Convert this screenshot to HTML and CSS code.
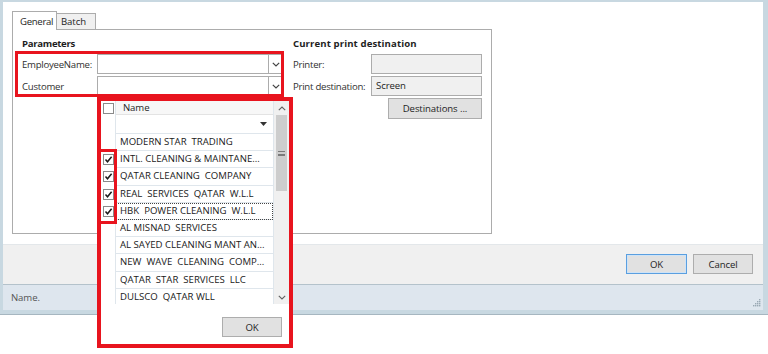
FILE: index.html
```html
<!DOCTYPE html>
<html>
<head>
<meta charset="utf-8">
<link rel="stylesheet" href="styles.css">
</head>
<body>
<div class="window">
  <div class="client">
    <div class="main">
      <div class="tabs">
        <div class="tab tab-active">General</div>
        <div class="tab tab-batch">Batch</div>
      </div>
      <div class="panel">
        <div class="group params">
          <div class="group-title">Parameters</div>
          <div class="row">
            <span class="lbl">EmployeeName:</span>
            <div class="combo"><span class="combo-btn"><svg width="8" height="5" viewBox="0 0 8 5"><path d="M0.8 0.8 L4 4 L7.2 0.8" fill="none" stroke="#444" stroke-width="1.2"/></svg></span></div>
          </div>
          <div class="row">
            <span class="lbl">Customer</span>
            <div class="combo"><span class="combo-btn"><svg width="8" height="5" viewBox="0 0 8 5"><path d="M0.8 0.8 L4 4 L7.2 0.8" fill="none" stroke="#444" stroke-width="1.2"/></svg></span></div>
          </div>
        </div>
        <div class="group dest">
          <div class="group-title">Current print destination</div>
          <div class="row">
            <span class="lbl lbl-dest">Printer:</span>
            <div class="field"></div>
          </div>
          <div class="row">
            <span class="lbl lbl-dest">Print destination:</span>
            <div class="field">Screen</div>
          </div>
          <div class="btn-row"><button class="btn btn-dest">Destinations ...</button></div>
        </div>
      </div>
    </div>
    <div class="footer">
      <button class="btn btn-default">OK</button>
      <button class="btn btn-cancel">Cancel</button>
    </div>
    <div class="status">Name.</div>
  </div>
  <svg class="grip" width="9" height="9" viewBox="0 0 9 9">
    <g fill="#9aa9b3">
      <rect x="7" y="1" width="1.4" height="1.4"/>
      <rect x="5" y="3" width="1.4" height="1.4"/><rect x="7" y="3" width="1.4" height="1.4"/>
      <rect x="3" y="5" width="1.4" height="1.4"/><rect x="5" y="5" width="1.4" height="1.4"/><rect x="7" y="5" width="1.4" height="1.4"/>
      <rect x="1" y="7" width="1.4" height="1.4"/><rect x="3" y="7" width="1.4" height="1.4"/><rect x="5" y="7" width="1.4" height="1.4"/><rect x="7" y="7" width="1.4" height="1.4"/>
    </g>
  </svg>
</div>

<div class="hl hl-params"></div>

<div class="popup">
  <div class="list">
    <div class="checkcol">
      <div class="cc-head"><span class="cb"></span></div>
      <div class="cc-filter"></div>
      <div class="cc-row"></div>
      <div class="cc-row"><span class="cb"><svg width="9" height="9" viewBox="0 0 9 9"><path d="M1.5 4.5 L3.5 6.8 L7.6 1.8" fill="none" stroke="#1a1a1a" stroke-width="1.5"/></svg></span></div>
      <div class="cc-row"><span class="cb"><svg width="9" height="9" viewBox="0 0 9 9"><path d="M1.5 4.5 L3.5 6.8 L7.6 1.8" fill="none" stroke="#1a1a1a" stroke-width="1.5"/></svg></span></div>
      <div class="cc-row"><span class="cb"><svg width="9" height="9" viewBox="0 0 9 9"><path d="M1.5 4.5 L3.5 6.8 L7.6 1.8" fill="none" stroke="#1a1a1a" stroke-width="1.5"/></svg></span></div>
      <div class="cc-row"><span class="cb"><svg width="9" height="9" viewBox="0 0 9 9"><path d="M1.5 4.5 L3.5 6.8 L7.6 1.8" fill="none" stroke="#1a1a1a" stroke-width="1.5"/></svg></span></div>
    </div>
    <div class="grid">
      <div class="g-head">Name</div>
      <div class="g-filter"><svg width="7" height="4" viewBox="0 0 7 4"><path d="M0 0 H7 L3.5 4 Z" fill="#333"/></svg></div>
      <div class="g-row">MODERN STAR  TRADING</div>
      <div class="g-row">INTL. CLEANING &amp; MAINTANE...</div>
      <div class="g-row">QATAR CLEANING  COMPANY</div>
      <div class="g-row">REAL  SERVICES  QATAR  W.L.L</div>
      <div class="g-row g-focus">HBK  POWER CLEANING  W.L.L</div>
      <div class="g-row">AL MISNAD  SERVICES</div>
      <div class="g-row">AL SAYED CLEANING MANT AN...</div>
      <div class="g-row">NEW  WAVE  CLEANING  COMP...</div>
      <div class="g-row">QATAR  STAR  SERVICES  LLC</div>
      <div class="g-row g-last">DULSCO  QATAR WLL</div>
    </div>
    <div class="scroll">
      <div class="sb-arrow"><svg width="8" height="5" viewBox="0 0 8 5"><path d="M0.8 4.2 L4 1 L7.2 4.2" fill="none" stroke="#606060" stroke-width="1.1"/></svg></div>
      <div class="sb-thumb"><span class="sb-grip"></span></div>
      <div class="sb-track"></div>
      <div class="sb-arrow"><svg width="8" height="5" viewBox="0 0 8 5"><path d="M0.8 0.8 L4 4 L7.2 0.8" fill="none" stroke="#606060" stroke-width="1.1"/></svg></div>
    </div>
  </div>
  <div class="popup-foot"><button class="btn btn-pop">OK</button></div>
</div>

<div class="hl hl-checks"></div>
</body>
</html>
```

FILE: styles.css
```css
* { box-sizing: border-box; }

body {
  margin: 0;
  background: #ffffff;
  font-family: "Open Sans", "Noto Sans", sans-serif;
  font-size: 9.6px;
  letter-spacing: -0.1px;
  color: #1e1e1e;
  position: relative;
  width: 768px;
  height: 354px;
  overflow: hidden;
}

.window {
  width: 768px;
  background: #c8d8e1;
  padding: 2px 5px 4px 3px;
  border-bottom: 1px solid #a6b6c0;
  position: relative;
}

.client {
  display: flex;
  flex-direction: column;
}

.main {
  background: #ffffff;
  height: 243px;
  padding: 9px 0 0 9px;
  border-bottom: 1px solid #e3e7ea;
}

.tabs {
  display: flex;
  align-items: flex-end;
  height: 18px;
}

.tab {
  line-height: 15px;
  white-space: nowrap;
}

.tab-active {
  width: 45px;
  height: 19px;
  margin-bottom: -1px;
  background: #ffffff;
  border: 1px solid #acacac;
  border-bottom: none;
  padding: 2px 0 0 7px;
  letter-spacing: -0.3px;
  position: relative;
  z-index: 1;
}

.tab-batch {
  width: 39px;
  height: 16px;
  background: #f0f0f0;
  border: 1px solid #acacac;
  border-left: none;
  border-bottom: none;
  padding: 0 0 0 4px;
}

.panel {
  width: 480px;
  height: 205px;
  border: 1px solid #acacac;
  display: flex;
  padding: 6px 0 0 9px;
}

.group-title {
  font-weight: 700;
  line-height: 16px;
  height: 16px;
  margin-bottom: 2px;
}

.params { width: 271px; }

.params .group-title { letter-spacing: -0.3px; }

.dest .group-title { letter-spacing: 0.1px; }

.row {
  display: flex;
  align-items: center;
  height: 20px;
  margin-bottom: 2px;
}

.lbl {
  width: 75px;
  flex: none;
  color: #303030;
  white-space: nowrap;
  letter-spacing: -0.25px;
}

.lbl-dest { width: 78px; }

.combo {
  width: 186px;
  height: 20px;
  border: 1px solid #acacac;
  background: #ffffff;
  display: flex;
  justify-content: flex-end;
}

.combo-btn {
  width: 14px;
  height: 18px;
  border-left: 1px solid #acacac;
  display: flex;
  align-items: center;
  justify-content: center;
}

.field {
  width: 111px;
  height: 20px;
  border: 1px solid #acacac;
  background: #f0f0f0;
  padding-left: 4px;
  line-height: 17px;
  color: #1e1e1e;
}

.btn-row {
  display: flex;
  justify-content: flex-end;
  width: 189px;
  margin-top: 2px;
}

.btn {
  font-family: "Open Sans", "Noto Sans", sans-serif;
  font-size: 9.6px;
  letter-spacing: -0.1px;
  color: #1e1e1e;
  background: #e1e1e1;
  border: 1px solid #adadad;
  padding: 0;
  height: 20px;
  margin: 0;
}

.btn-dest { width: 94px; height: 21px; }

.footer {
  height: 40px;
  background: #f0f0f0;
  border-bottom: 1px solid #b4c2cb;
  display: flex;
  justify-content: flex-end;
  gap: 6px;
  padding: 9px 10px 0 0;
}

.btn-default {
  width: 61px;
  border-color: #5a9fe0;
  box-shadow: inset 0 0 0 1px #cfe3f6;
}

.btn-cancel { width: 60px; }

.status {
  height: 25px;
  background: #dee6ee;
  padding-left: 8px;
  line-height: 25px;
  color: #555;
}

.grip {
  position: absolute;
  right: 7px;
  bottom: 7px;
}

/* highlight annotations */
.hl {
  position: absolute;
  border: 3px solid #e8141e;
  pointer-events: none;
}

.hl-params {
  left: 15px;
  top: 51px;
  width: 269px;
  height: 46px;
}

.hl-checks {
  left: 97px;
  top: 149px;
  width: 20px;
  height: 75px;
}

/* popup */
.popup {
  position: absolute;
  left: 97px;
  top: 97px;
  width: 196px;
  height: 251px;
  border: 4px solid #e8141e;
  background: #ffffff;
  display: flex;
  flex-direction: column;
}

.list {
  display: flex;
  height: 203px;
  overflow: hidden;
}

.checkcol {
  width: 14px;
  flex: none;
}

.cb {
  width: 11px;
  height: 11px;
  border: 1px solid #8a8a8a;
  background: #fff;
  display: flex;
  align-items: center;
  justify-content: center;
}

.cc-head {
  height: 14px;
  display: flex;
  align-items: center;
  padding-left: 2px;
}

.cc-filter { height: 19px; }

.cc-row {
  height: 17.2px;
  display: flex;
  align-items: center;
  padding-left: 2px;
}

.grid {
  width: 159px;
  flex: none;
  border-left: 1px solid #dfe6ec;
  border-right: 1px solid #dfe6ec;
}

.g-head {
  height: 14px;
  background: #f7f7f7;
  border-bottom: 1px solid #e3e3e3;
  padding-left: 7px;
  line-height: 13px;
  color: #1e1e1e;
}

.g-filter {
  height: 19px;
  border-bottom: 1px solid #dfe6ec;
  display: flex;
  align-items: center;
  justify-content: flex-end;
  padding-right: 6px;
}

.g-row {
  height: 17.2px;
  border-bottom: 1px solid #dfe6ec;
  padding-left: 4px;
  line-height: 16px;
  white-space: pre;
  overflow: hidden;
  letter-spacing: 0;
  color: #1a1a1a;
}

.g-focus {
  outline: 1px dotted #444;
  outline-offset: -1px;
}

.g-last { border-bottom: none; }

.scroll {
  width: 15px;
  flex: none;
  display: flex;
  flex-direction: column;
  background: #f0f0f0;
}

.sb-arrow {
  height: 14px;
  display: flex;
  align-items: center;
  justify-content: center;
  background: #f0f0f0;
}

.sb-thumb {
  height: 76px;
  margin: 0 2px;
  background: #cdcdcd;
  display: flex;
  align-items: center;
  justify-content: center;
}

.sb-grip {
  width: 7px;
  height: 5px;
  border-top: 1px solid #7a7a7a;
  border-bottom: 1px solid #7a7a7a;
  background: linear-gradient(#cdcdcd 1px, #7a7a7a 1px, #7a7a7a 2px, #cdcdcd 2px);
  background-size: 100% 3px;
  background-repeat: no-repeat;
  background-position: 0 1px;
}

.sb-track { flex: 1; }

.popup-foot {
  flex: 1;
  display: flex;
  justify-content: flex-end;
  padding: 13px 7px 0 0;
}

.btn-pop { width: 60px; }
```
